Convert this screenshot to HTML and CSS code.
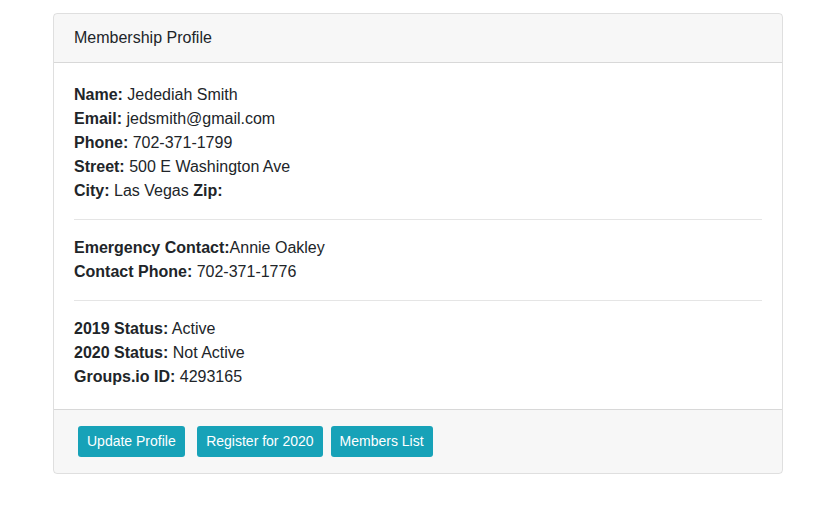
FILE: index.html
```html
<!DOCTYPE html>
<html>
<head>
<meta charset="utf-8">
<link rel="stylesheet" href="styles.css">
</head>
<body>
<div class="page">
  <div class="card">
    <div class="card-header">Membership Profile</div>
    <div class="card-body">
      <p><b>Name:</b> Jedediah Smith<br>
      <b>Email:</b> jedsmith@gmail.com<br>
      <b>Phone:</b> 702-371-1799<br>
      <b>Street:</b> 500 E Washington Ave<br>
      <b>City:</b> Las Vegas <b>Zip:</b></p>
      <hr>
      <p><b>Emergency Contact:</b>Annie Oakley<br>
      <b>Contact Phone:</b> 702-371-1776</p>
      <hr>
      <p><b>2019 Status:</b> Active<br>
      <b>2020 Status:</b> Not Active<br>
      <b>Groups.io ID:</b> 4293165</p>
    </div>
    <div class="card-footer">
      <a class="btn">Update Profile</a> <a class="btn">Register for 2020</a><a class="btn">Members List</a>
    </div>
  </div>
</div>
</body>
</html>
```
FILE: styles.css
```css
html, body {
  margin: 0;
  padding: 0;
  background: #fff;
}
body {
  font-family: "Liberation Sans", Arial, sans-serif;
  font-size: 16px;
  line-height: 24px;
  color: #212529;
}
.page {
  padding: 13px 0 0 53px;
}
.card {
  width: 730px;
  box-sizing: border-box;
  border: 1px solid rgba(0,0,0,.125);
  border-radius: 4px;
  overflow: hidden;
}
.card-header {
  padding: 12px 20px;
  background: rgba(0,0,0,.03);
  border-bottom: 1px solid rgba(0,0,0,.125);
}
.card-body {
  padding: 20px 20px 20px;
}
.card-body p {
  margin: 0;
}
.card-body b {
  font-weight: bold;
}
hr {
  margin: 16px 0;
  border: 0;
  border-top: 1px solid rgba(0,0,0,.1);
  height: 0;
}
.card-footer {
  padding: 12px 20px;
  background: rgba(0,0,0,.03);
  border-top: 1px solid rgba(0,0,0,.125);
}
.btn {
  display: inline-block;
  margin: 4px;
  padding: 5px 9px;
  font-size: 14px;
  line-height: 21px;
  height: 31px;
  box-sizing: border-box;
  color: #fff;
  background: #17a2b8;
  border-radius: 3px;
  vertical-align: top;
}
```
